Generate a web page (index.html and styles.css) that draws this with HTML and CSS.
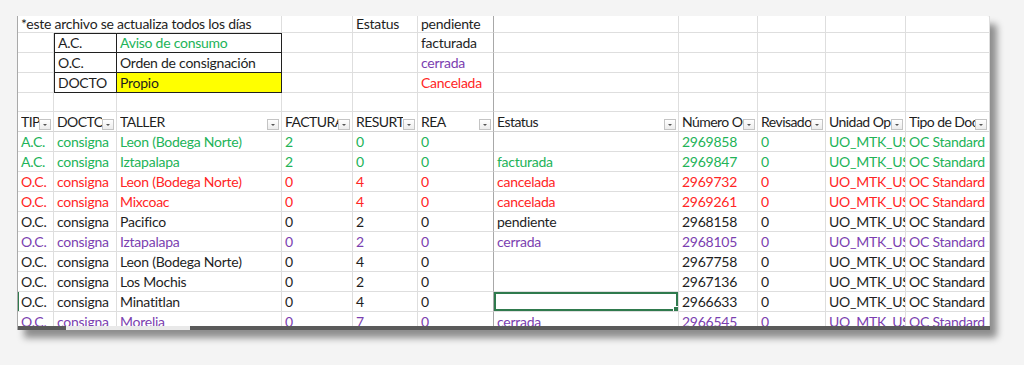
FILE: index.html
```html
<!DOCTYPE html>
<html lang="es">
<head>
<meta charset="utf-8">
<title>Hoja de consignas</title>
<link rel="stylesheet" href="styles.css">
</head>
<body>
<div class="page">
  <div class="sheet">
    <div class="viewport">
      <table class="grid">
        <colgroup>
          <col class="c1"><col class="c2"><col class="c3"><col class="c4"><col class="c5"><col class="c6"><col class="c7"><col class="c8"><col class="c9"><col class="c10"><col class="c11">
        </colgroup>
        <tbody>
          <tr class="r-top">
            <td class="spill nor"><span class="over">*este archivo se actualiza todos los días</span></td>
            <td class="nor"></td><td></td><td></td>
            <td>Estatus</td><td class="sep">pendiente</td>
            <td></td><td></td><td></td><td></td><td></td>
          </tr>
          <tr>
            <td></td><td class="lg lg-t">A.C.</td><td class="lg lg-t lg-r green">Aviso de consumo</td>
            <td></td><td></td><td class="sep">facturada</td>
            <td></td><td></td><td></td><td></td><td></td>
          </tr>
          <tr>
            <td></td><td class="lg">O.C.</td><td class="lg lg-r">Orden de consignación</td>
            <td></td><td></td><td class="sep purple">cerrada</td>
            <td></td><td></td><td></td><td></td><td></td>
          </tr>
          <tr>
            <td></td><td class="lg lg-b">DOCTO</td><td class="lg lg-b lg-r yellow">Propio</td>
            <td></td><td></td><td class="sep red">Cancelada</td>
            <td></td><td></td><td></td><td></td><td></td>
          </tr>
          <tr class="r-short">
            <td></td><td></td><td></td><td></td><td></td><td class="sep"></td>
            <td></td><td></td><td></td><td></td><td></td>
          </tr>
          <tr class="head">
            <td><div class="hc"><span class="ht">TIP</span><span class="flt"></span></div></td>
            <td><div class="hc"><span class="ht">DOCTO</span><span class="flt"></span></div></td>
            <td><div class="hc"><span class="ht">TALLER</span><span class="flt"></span></div></td>
            <td><div class="hc"><span class="ht">FACTURA</span><span class="flt"></span></div></td>
            <td><div class="hc"><span class="ht">RESURTI</span><span class="flt"></span></div></td>
            <td class="sep"><div class="hc"><span class="ht">REA</span><span class="flt"></span></div></td>
            <td><div class="hc"><span class="ht">Estatus</span><span class="flt"></span></div></td>
            <td><div class="hc"><span class="ht">Número OC</span><span class="flt"></span></div></td>
            <td><div class="hc"><span class="ht">Revisado</span><span class="flt"></span></div></td>
            <td><div class="hc"><span class="ht">Unidad Op</span><span class="flt"></span></div></td>
            <td><div class="hc"><span class="ht">Tipo de Doc</span><span class="flt"></span></div></td>
          </tr>
          <tr class="green">
            <td>A.C.</td><td>consigna</td><td>Leon (Bodega Norte)</td><td>2</td><td>0</td><td class="sep">0</td><td></td><td>2969858</td><td>0</td><td class="clip">UO_MTK_US_</td><td>OC Standard</td>
          </tr>
          <tr class="green">
            <td>A.C.</td><td>consigna</td><td>Iztapalapa</td><td>2</td><td>0</td><td class="sep">0</td><td>facturada</td><td>2969847</td><td>0</td><td class="clip">UO_MTK_US_</td><td>OC Standard</td>
          </tr>
          <tr class="red">
            <td>O.C.</td><td>consigna</td><td>Leon (Bodega Norte)</td><td>0</td><td>4</td><td class="sep">0</td><td>cancelada</td><td>2969732</td><td>0</td><td class="clip">UO_MTK_US_</td><td>OC Standard</td>
          </tr>
          <tr class="red">
            <td>O.C.</td><td>consigna</td><td>Mixcoac</td><td>0</td><td>4</td><td class="sep">0</td><td>cancelada</td><td>2969261</td><td>0</td><td class="clip">UO_MTK_US_</td><td>OC Standard</td>
          </tr>
          <tr>
            <td>O.C.</td><td>consigna</td><td>Pacifico</td><td>0</td><td>2</td><td class="sep">0</td><td>pendiente</td><td>2968158</td><td>0</td><td class="clip">UO_MTK_US_</td><td>OC Standard</td>
          </tr>
          <tr class="purple">
            <td>O.C.</td><td>consigna</td><td>Iztapalapa</td><td>0</td><td>2</td><td class="sep">0</td><td>cerrada</td><td>2968105</td><td>0</td><td class="clip">UO_MTK_US_</td><td>OC Standard</td>
          </tr>
          <tr>
            <td>O.C.</td><td>consigna</td><td>Leon (Bodega Norte)</td><td>0</td><td>4</td><td class="sep">0</td><td></td><td>2967758</td><td>0</td><td class="clip">UO_MTK_US_</td><td>OC Standard</td>
          </tr>
          <tr>
            <td>O.C.</td><td>consigna</td><td>Los Mochis</td><td>0</td><td>2</td><td class="sep">0</td><td></td><td>2967136</td><td>0</td><td class="clip">UO_MTK_US_</td><td>OC Standard</td>
          </tr>
          <tr>
            <td class="rowsel">O.C.</td><td>consigna</td><td>Minatitlan</td><td>0</td><td>4</td><td class="sep">0</td><td class="selected"><span class="handle"></span></td><td>2966633</td><td>0</td><td class="clip">UO_MTK_US_</td><td>OC Standard</td>
          </tr>
          <tr class="purple">
            <td>O.C.</td><td>consigna</td><td>Morelia</td><td>0</td><td>7</td><td class="sep">0</td><td>cerrada</td><td>2966545</td><td>0</td><td class="clip">UO_MTK_US_</td><td>OC Standard</td>
          </tr>
        </tbody>
      </table>
    </div>
    <div class="hbar">
      <span class="seg dark s1"></span>
      <span class="seg light s2"></span>
      <span class="seg dark s3"></span>
    </div>
  </div>
</div>
</body>
</html>
```

FILE: styles.css
```css
html, body {
  margin: 0;
  padding: 0;
}

body {
  background: #f4f4f4;
  font-family: Lato, "Open Sans", sans-serif;
  font-size: 14px;
  letter-spacing: -0.25px;
  color: #1e1e1e;
}

.page {
  padding: 16px 0 0 17px;
  height: 349px;
}

.sheet {
  width: 973px;
  background: #ffffff;
  box-shadow: 7px 8px 7px rgba(0, 0, 0, 0.42);
  border-radius: 0 4px 4px 0;
}

.viewport {
  height: 310px;
  overflow: hidden;
  border-left: 1px solid #a9a9a9;
}

.grid {
  table-layout: fixed;
  border-collapse: separate;
  border-spacing: 0;
  width: 972px;
}

.c1 { width: 36px; }
.c2 { width: 63px; }
.c3 { width: 165px; }
.c4 { width: 71px; }
.c5 { width: 65px; }
.c6 { width: 76px; }
.c7 { width: 185px; }
.c8 { width: 79px; }
.c9 { width: 68px; }
.c10 { width: 80px; }
.c11 { width: 84px; }

.grid td {
  height: 20px;
  padding: 0 1px 0 3px;
  border-right: 1px solid #dedede;
  border-bottom: 1px solid #dedede;
  white-space: nowrap;
  overflow: hidden;
  vertical-align: bottom;
  line-height: 18px;
  box-sizing: border-box;
}

.grid tr.r-top td {
  height: 17px;
  line-height: 16px;
}

.grid tr.r-short td {
  height: 19px;
}

.grid td.nor {
  border-right-color: transparent;
}

.grid td.spill {
  overflow: visible;
  position: relative;
}

.over {
  position: relative;
  z-index: 1;
}

.grid td.sep {
  border-right-color: #a8a8a8;
}

.grid td.lg {
  border-right: 1px solid #202020;
  border-bottom: 1px solid #202020;
  border-left: 1px solid #202020;
}

.grid td.lg-r {
  border-left: none;
}

.grid td.lg-t {
  box-shadow: inset 0 1px 0 #202020;
}

.grid td.yellow {
  background: #ffff00;
  color: #1e1e1e;
}

.green, .green td { color: #22b358; }
.red, .red td { color: #ff2525; }
.purple, .purple td { color: #7b3fb0; }

.grid td.clip {
  text-overflow: clip;
  padding-right: 0;
}

/* header row */
.grid tr.head td {
  padding: 0 2px 0 3px;
  color: #1e1e1e;
  border-bottom-color: #d4d4d4;
}

.hc {
  display: flex;
  align-items: flex-end;
  height: 19px;
}

.ht {
  flex: 1;
  min-width: 0;
  overflow: hidden;
  white-space: nowrap;
  line-height: 18px;
  letter-spacing: -0.55px;
}

.flt {
  flex: none;
  width: 10px;
  height: 9px;
  margin-bottom: 1px;
  border: 1px solid #c4c4c4;
  background: #f4f4f4 linear-gradient(#ffffff, #ececec);
  position: relative;
}

.flt::after {
  content: "";
  position: absolute;
  left: 3px;
  top: 4px;
  border-left: 2px solid transparent;
  border-right: 2px solid transparent;
  border-top: 2px solid #555;
}

/* selection */
.grid td.selected {
  position: relative;
  box-shadow: inset 0 0 0 2px #2f7a4d;
}

.handle {
  position: absolute;
  right: -2px;
  bottom: -2px;
  width: 5px;
  height: 5px;
  background: #2f7a4d;
  border: 1px solid #ffffff;
}

.grid td.rowsel {
  box-shadow: inset 1px 0 0 #2f7a4d;
}

/* bottom scroll bar */
.hbar {
  display: flex;
  height: 4px;
  border-left: 1px solid #a9a9a9;
}

.seg {
  display: block;
  height: 4px;
}

.dark { background: #5a5a5a; }
.light { background: #e9e9e9; }
.s1 { width: 48px; }
.s2 { width: 124px; }
.s3 { flex: 1; }
```
